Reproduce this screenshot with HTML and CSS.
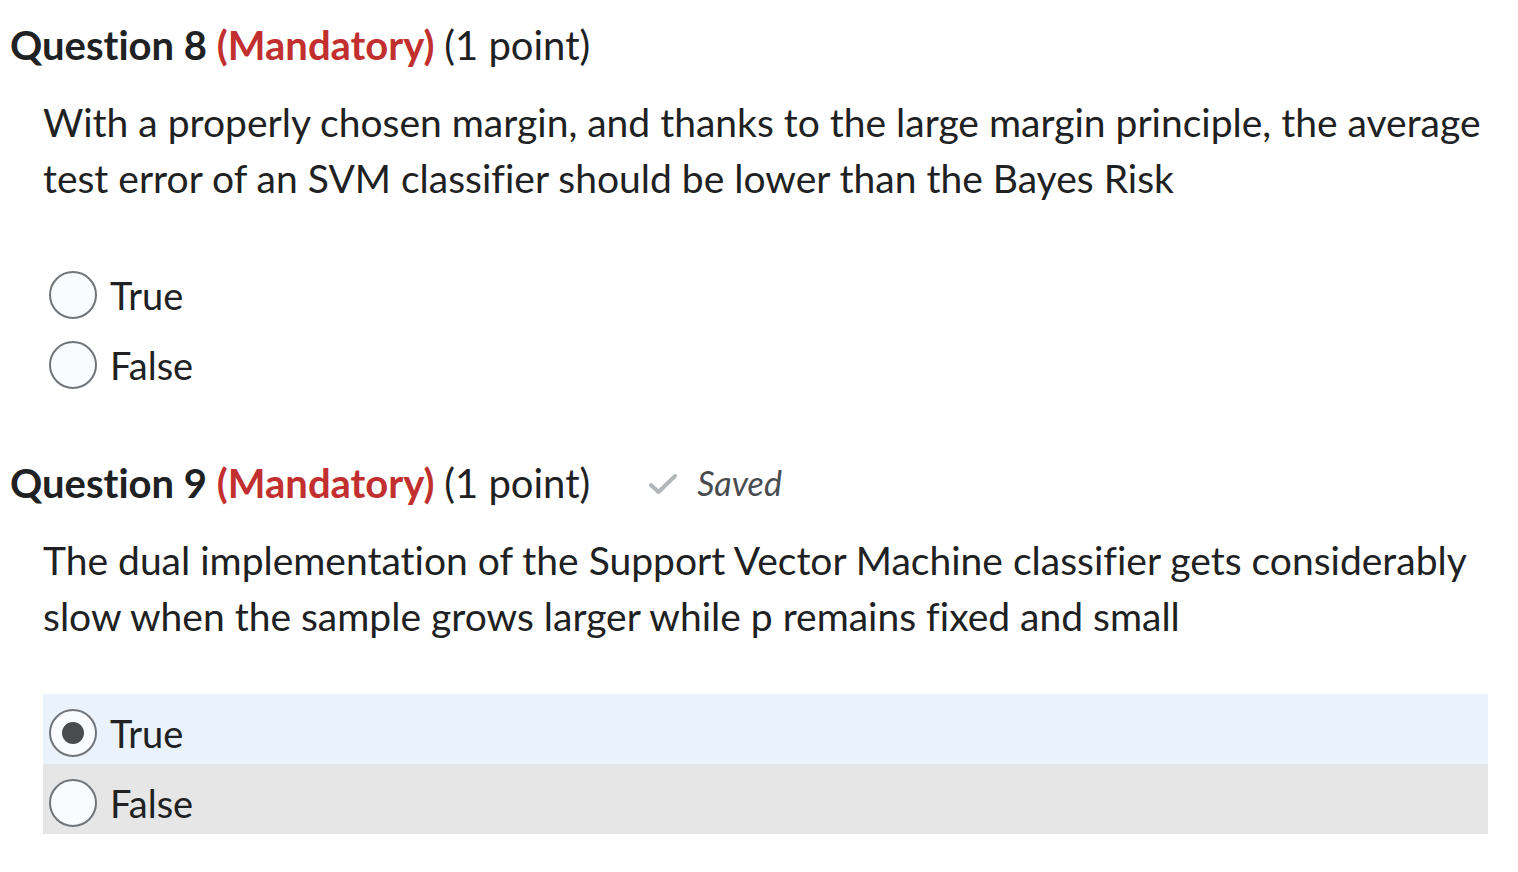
FILE: index.html
```html
<!DOCTYPE html>
<html lang="en">
<head>
    <meta charset="UTF-8">
    <title>Quiz</title>
    <link rel="stylesheet" href="styles.css">
</head>
<body>
    <div class="question">
        <h2 class="q-title">Question 8 <span class="mandatory">(Mandatory)</span> <span class="points">(1 point)</span></h2>
        <p class="q-text">With a properly chosen margin, and thanks to the large margin principle, the average test error of an SVM classifier should be lower than the Bayes Risk</p>
        <div class="choices">
            <label class="choice"><span class="radio"></span>True</label>
            <label class="choice"><span class="radio"></span>False</label>
        </div>
    </div>

    <div class="question">
        <h2 class="q-title">Question 9 <span class="mandatory">(Mandatory)</span> <span class="points">(1 point)</span><span class="saved"><svg width="30" height="24" viewBox="0 0 30 24"><path d="M3 13 L10.5 20 L27 4" fill="none" stroke="#b1b6b9" stroke-width="4" stroke-linecap="round" stroke-linejoin="round"/></svg><em>Saved</em></span></h2>
        <p class="q-text">The dual implementation of the Support Vector Machine classifier gets considerably slow when the sample grows larger while p remains fixed and small</p>
        <div class="choices">
            <label class="choice selected"><span class="radio checked"></span>True</label>
            <label class="choice hover"><span class="radio"></span>False</label>
        </div>
    </div>
</body>
</html>
```

FILE: styles.css
```css
* {
    margin: 0;
    padding: 0;
    box-sizing: border-box;
}

body {
    font-family: Lato, "Open Sans", sans-serif;
    font-variant-ligatures: none;
    color: #202122;
    padding: 20px 30px 0 10px;
}

.question {
    margin-bottom: 62px;
}

.q-title {
    font-size: 40px;
    font-weight: 700;
    line-height: 50px;
    height: 50px;
}

.mandatory {
    color: #c22f2f;
}

.points {
    font-weight: 400;
}

.saved {
    display: inline-flex;
    align-items: center;
    gap: 19px;
    margin-left: 58px;
    font-size: 34px;
    font-weight: 400;
    color: #494c4e;
    vertical-align: top;
    height: 50px;
}

.saved svg {
    margin-top: 2px;
}

.q-text {
    font-size: 39px;
    line-height: 56px;
    padding-left: 33px;
    margin-top: 24px;
    margin-bottom: 50px;
}

.choices {
    margin-left: 33px;
}

.choice {
    display: flex;
    align-items: center;
    height: 70px;
    padding-top: 8px;
    font-size: 38px;
    padding-left: 6px;
    gap: 13px;
}

.choice.selected {
    background: #eaf2fb;
}

.choice.hover {
    background: #e6e6e6;
}

.radio {
    width: 48px;
    height: 48px;
    border: 2px solid #70757a;
    border-radius: 50%;
    background: #f9fbff;
    display: flex;
    align-items: center;
    justify-content: center;
}

.radio.checked::after {
    content: "";
    width: 22px;
    height: 22px;
    border-radius: 50%;
    background: #494c4e;
}
```
